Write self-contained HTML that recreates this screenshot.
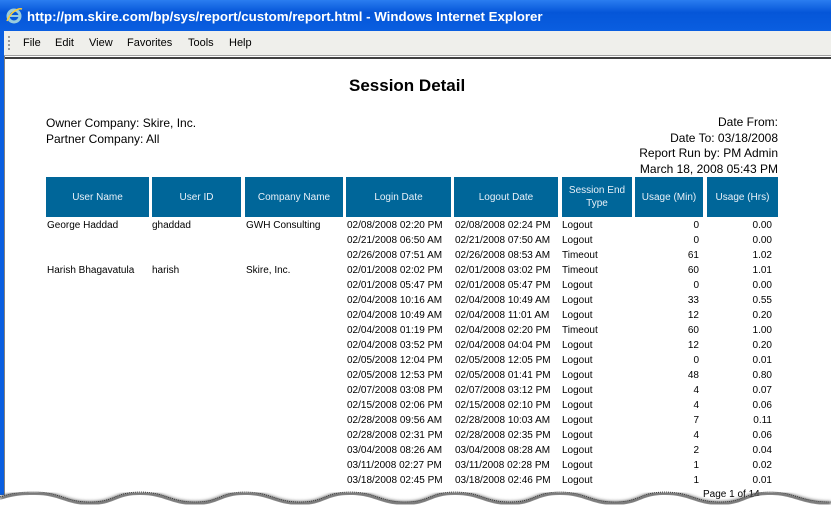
<!DOCTYPE html>
<html><head><style>
*{margin:0;padding:0;box-sizing:border-box}
body{width:831px;height:508px;overflow:hidden;background:#fff;font-family:"Liberation Sans",Arial,sans-serif;position:relative}
.a{position:absolute;white-space:nowrap}
#title{left:0;top:0;width:831px;height:31px;background:linear-gradient(#2a7df0,#0556d8 40%,#0a5ee0);color:#fff;font-weight:bold;font-size:13.3px}
#menu{left:4px;top:31px;width:827px;height:25px;background:#efefeb;border-bottom:1px solid #a0a0a0;font-size:11px}
.h{position:absolute;top:177px;height:40px;background:#006699;color:#e8f0f8;font-size:10px;display:flex;align-items:center;justify-content:center;text-align:center;line-height:13px}
.r{position:absolute;font-size:10px;color:#000;white-space:nowrap}
</style></head><body>
<div class="a" id="title">
<svg style="position:absolute;left:5px;top:7px" width="18" height="18" viewBox="0 0 18 18"><circle cx="9" cy="9" r="6" fill="none" stroke="#9cd" stroke-width="3"/><path d="M4 9h10" stroke="#9cd" stroke-width="2"/><path d="M2 14C6 4 14 1 17 2" stroke="#fc3" stroke-width="1.5" fill="none"/></svg>
<span style="position:absolute;left:27px;top:9px">http://pm.skire.com/bp/sys/report/custom/report.html - Windows Internet Explorer</span></div>
<div class="a" style="left:0;top:31px;width:4px;height:464px;background:#0a5ee0"></div>
<div class="a" style="left:4px;top:31px;width:1px;height:464px;background:#808080"></div>
<div class="a" id="menu">
<span style="position:absolute;left:4px;top:5px;width:2px;height:14px;border-left:2px dotted #999"></span>
<span style="position:absolute;left:19px;top:6px">File</span>
<span style="position:absolute;left:51px;top:6px">Edit</span>
<span style="position:absolute;left:85px;top:6px">View</span>
<span style="position:absolute;left:123px;top:6px">Favorites</span>
<span style="position:absolute;left:184px;top:6px">Tools</span>
<span style="position:absolute;left:225px;top:6px">Help</span></div>
<div class="a" style="left:5px;top:57px;width:826px;height:2px;background:#404040"></div>
<div class="a" style="left:349px;top:76px;font-size:17px;font-weight:bold">Session Detail</div>
<div class="a" style="left:46px;top:115px;font-size:12px;line-height:16px">Owner Company: Skire, Inc.<br>Partner Company: All</div>
<div class="a" style="right:53px;top:115px;font-size:12px;line-height:15.5px;text-align:right">Date From:<br>Date To: 03/18/2008<br>Report Run by: PM Admin<br>March 18, 2008 05:43 PM</div>
<div class="h" style="left:46px;width:103px">User Name</div>
<div class="h" style="left:152px;width:89px">User ID</div>
<div class="h" style="left:245px;width:98px">Company Name</div>
<div class="h" style="left:346px;width:105px">Login Date</div>
<div class="h" style="left:454px;width:104px">Logout Date</div>
<div class="h" style="left:562px;width:70px">Session End<br>Type</div>
<div class="h" style="left:635px;width:68px">Usage (Min)</div>
<div class="h" style="left:707px;width:71px">Usage (Hrs)</div>
<div class="r" style="left:47px;top:220px">George Haddad</div>
<div class="r" style="left:152px;top:220px">ghaddad</div>
<div class="r" style="left:246px;top:220px">GWH Consulting</div>
<div class="r" style="left:47px;top:265px">Harish Bhagavatula</div>
<div class="r" style="left:152px;top:265px">harish</div>
<div class="r" style="left:246px;top:265px">Skire, Inc.</div>
<div id="rows"></div>
<script>
var d=[["02/08/2008 02:20 PM","02/08/2008 02:24 PM","Logout","0","0.00"],
["02/21/2008 06:50 AM","02/21/2008 07:50 AM","Logout","0","0.00"],
["02/26/2008 07:51 AM","02/26/2008 08:53 AM","Timeout","61","1.02"],
["02/01/2008 02:02 PM","02/01/2008 03:02 PM","Timeout","60","1.01"],
["02/01/2008 05:47 PM","02/01/2008 05:47 PM","Logout","0","0.00"],
["02/04/2008 10:16 AM","02/04/2008 10:49 AM","Logout","33","0.55"],
["02/04/2008 10:49 AM","02/04/2008 11:01 AM","Logout","12","0.20"],
["02/04/2008 01:19 PM","02/04/2008 02:20 PM","Timeout","60","1.00"],
["02/04/2008 03:52 PM","02/04/2008 04:04 PM","Logout","12","0.20"],
["02/05/2008 12:04 PM","02/05/2008 12:05 PM","Logout","0","0.01"],
["02/05/2008 12:53 PM","02/05/2008 01:41 PM","Logout","48","0.80"],
["02/07/2008 03:08 PM","02/07/2008 03:12 PM","Logout","4","0.07"],
["02/15/2008 02:06 PM","02/15/2008 02:10 PM","Logout","4","0.06"],
["02/28/2008 09:56 AM","02/28/2008 10:03 AM","Logout","7","0.11"],
["02/28/2008 02:31 PM","02/28/2008 02:35 PM","Logout","4","0.06"],
["03/04/2008 08:26 AM","03/04/2008 08:28 AM","Logout","2","0.04"],
["03/11/2008 02:27 PM","03/11/2008 02:28 PM","Logout","1","0.02"],
["03/18/2008 02:45 PM","03/18/2008 02:46 PM","Logout","1","0.01"]];
var h="";d.forEach(function(r,i){var t=220+i*15;
h+='<div class="r" style="left:347px;top:'+t+'px">'+r[0]+'</div><div class="r" style="left:455px;top:'+t+'px">'+r[1]+'</div><div class="r" style="left:562px;top:'+t+'px">'+r[2]+'</div><div class="r" style="right:132px;top:'+t+'px">'+r[3]+'</div><div class="r" style="right:59px;top:'+t+'px">'+r[4]+'</div>';});
document.getElementById("rows").innerHTML=h;
</script>
<div class="a" style="left:703px;top:489px;font-size:10px">Page 1 of 14</div>
<svg class="a" style="left:0;top:480px" width="831" height="28" viewBox="0 0 831 28">
<defs><filter id="b"><feGaussianBlur stdDeviation="1.5"/></filter></defs>
<path d="M0 17 C15 12 25 12 35 12 C60 12 65 22 90 22 C115 22 115 12 140 12 C165 12 170 22 195 22 C220 22 220 12 245 12 C270 12 275 22 300 22 C325 22 325 12 350 12 C375 12 380 22 405 22 C430 22 430 12 455 12 C480 12 485 22 510 22 C535 22 535 12 560 12 C585 12 590 22 615 22 C640 22 640 12 665 12 C690 12 695 22 720 22 C745 22 745 12 770 12 C795 12 800 22 831 22" fill="none" stroke="#555" stroke-width="4" filter="url(#b)" transform="translate(0,1.5)"/>
<path d="M0 17 C15 12 25 12 35 12 C60 12 65 22 90 22 C115 22 115 12 140 12 C165 12 170 22 195 22 C220 22 220 12 245 12 C270 12 275 22 300 22 C325 22 325 12 350 12 C375 12 380 22 405 22 C430 22 430 12 455 12 C480 12 485 22 510 22 C535 22 535 12 560 12 C585 12 590 22 615 22 C640 22 640 12 665 12 C690 12 695 22 720 22 C745 22 745 12 770 12 C795 12 800 22 831 22" fill="none" stroke="#222" stroke-width="0.8" stroke-dasharray="1 1"/>
<path d="M0 17 C15 12 25 12 35 12 C60 12 65 22 90 22 C115 22 115 12 140 12 C165 12 170 22 195 22 C220 22 220 12 245 12 C270 12 275 22 300 22 C325 22 325 12 350 12 C375 12 380 22 405 22 C430 22 430 12 455 12 C480 12 485 22 510 22 C535 22 535 12 560 12 C585 12 590 22 615 22 C640 22 640 12 665 12 C690 12 695 22 720 22 C745 22 745 12 770 12 C795 12 800 22 831 22 V28 H0Z" fill="#fff" transform="translate(0,3)"/>
</svg>
</body></html>
